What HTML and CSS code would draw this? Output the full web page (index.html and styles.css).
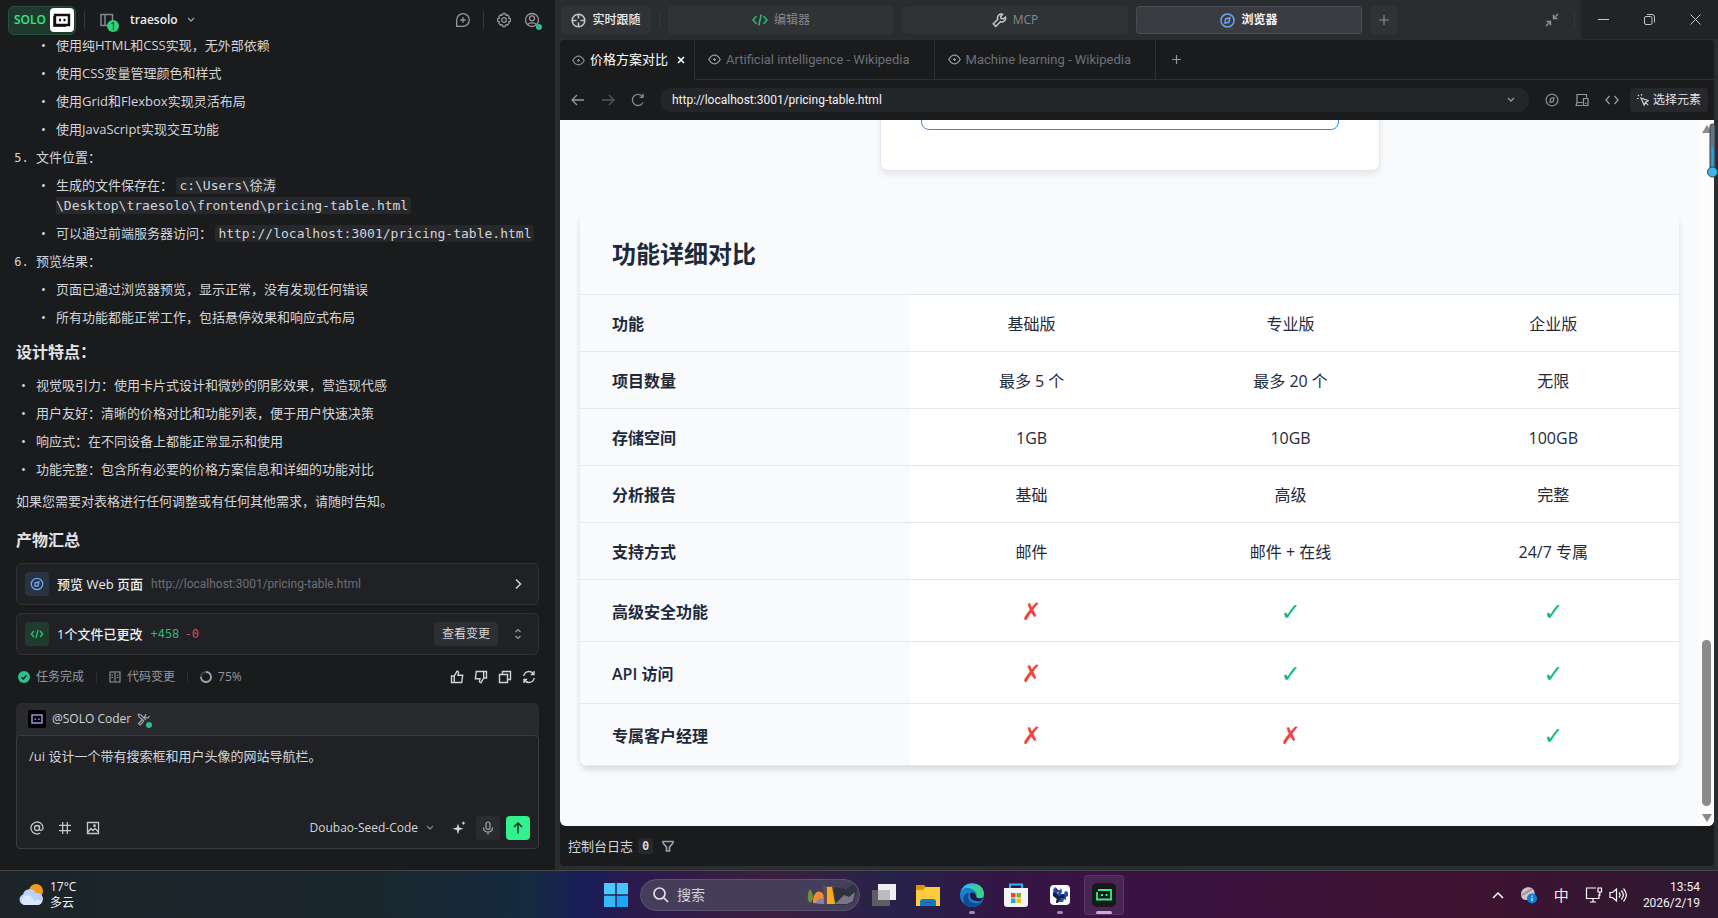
FILE: index.html
```html
<!DOCTYPE html>
<html lang="zh-CN">
<head>
	<meta charset="utf-8">
	<title>traesolo</title>
	<link rel="stylesheet" href="styles.css">
</head>
<body>
	<div class="window">
		<!-- Chat -->
		<section class="chat">
			<header class="chat-header">
				<button class="solo" aria-label="SOLO">
					<span>SOLO</span>
					<span class="solo-tile"><svg width="18" height="14" viewBox="0 0 18 14" fill="none" stroke="#111" stroke-width="2.4"><path d="M2 2h14v10H2z"/><path d="M1 3v10h12" stroke-width="1.500"/><path d="M6 7h2M10.500 7h2"/></svg></span>
				</button>
				<span class="sep"></span>
				<span class="project-icon">
					<svg width="14" height="14" viewBox="0 0 14 14" fill="none" stroke="#85878e" stroke-width="1.5"><path d="M1 1.500h11.500v11H1zM5 1.500v11"/></svg>
					<i class="count">1</i>
				</span>
				<button class="project">traesolo <svg width="8" height="6" viewBox="0 0 8 6" fill="none" stroke="#9a9ca3" stroke-width="1.3"><path d="M1 1l3 3 3-3"/></svg></button>
				<div class="chat-actions">
					<button aria-label="新建对话"><svg width="16" height="16" viewBox="0 0 16 16" fill="none" stroke="#96989f" stroke-width="1.3"><path d="M1.700 14.300V8A6.300 6.300 0 1 1 8 14.300zM8 5.300v5.400M5.300 8h5.400"/></svg></button>
					<span class="sep"></span>
					<button aria-label="设置"><svg width="16" height="16" viewBox="0 0 16 16" fill="none" stroke="#96989f" stroke-width="1.3"><path d="M6.500 2L8 1.300 9.500 2l.5 1.300 1.600-.3 1.400 1.400-.3 1.600 1.600.6V9.400l-1.600.6.3 1.600-1.400 1.400-1.600-.3-.5 1.300-1.500.7-1.500-.7-.5-1.300-1.600.3L3 11.600l.3-1.600-1.600-.6V6.600L3.300 6 3 4.400 4.400 3l1.600.3z"/><circle cx="8" cy="8" r="2.300"/></svg></button>
					<button class="user" aria-label="账户"><svg width="16" height="16" viewBox="0 0 16 16" fill="none" stroke="#96989f" stroke-width="1.3"><circle cx="8" cy="8" r="6.500"/><circle cx="8" cy="6.300" r="2.500"/><path d="M3.800 12.800c1-2.500 7.400-2.500 8.400 0"/></svg><i class="dot"></i></button>
				</div>
			</header>

			<div class="log">
				<ul class="nested">
					<li>使用纯HTML和CSS实现，无外部依赖</li>
					<li>使用CSS变量管理颜色和样式</li>
					<li>使用Grid和Flexbox实现灵活布局</li>
					<li>使用JavaScript实现交互功能</li>
				</ul>
				<ol start="5">
					<li>文件位置：
						<ul>
							<li>生成的文件保存在： <code>c:\Users\徐涛\Desktop\traesolo\frontend\pricing-table.html</code></li>
							<li>可以通过前端服务器访问： <code>http://localhost:3001/pricing-table.html</code></li>
						</ul>
					</li>
					<li>预览结果：
						<ul>
							<li>页面已通过浏览器预览，显示正常，没有发现任何错误</li>
							<li>所有功能都能正常工作，包括悬停效果和响应式布局</li>
						</ul>
					</li>
				</ol>
				<h3>设计特点：</h3>
				<ul>
					<li>视觉吸引力：使用卡片式设计和微妙的阴影效果，营造现代感</li>
					<li>用户友好：清晰的价格对比和功能列表，便于用户快速决策</li>
					<li>响应式：在不同设备上都能正常显示和使用</li>
					<li>功能完整：包含所有必要的价格方案信息和详细的功能对比</li>
				</ul>
				<p>如果您需要对表格进行任何调整或有任何其他需求，请随时告知。</p>
				<h3>产物汇总</h3>

				<div class="artifact">
					<span class="tile tile-blue"><svg width="14" height="14" viewBox="0 0 14 14" fill="none" stroke="#6ba4ef" stroke-width="1.3"><circle cx="7" cy="7" r="5.700"/><path d="M5 6l4-1-1 4-3 0z"/></svg></span>
					<strong>预览 Web 页面</strong>
					<a href="#">http://localhost:3001/pricing-table.html</a>
					<svg class="end" width="24" height="12" viewBox="0 0 24 12" fill="none" stroke="#d0d2d6" stroke-width="1.5"><path d="M10 1.500L14.500 6 10 10.500"/></svg>
				</div>
				<div class="artifact">
					<span class="tile tile-green"><svg width="14" height="12" viewBox="0 0 14 12" fill="none" stroke="#2fc678" stroke-width="1.3"><path d="M4 3L1.300 6 4 9M10 3l2.700 3L10 9M8 2L6 10"/></svg></span>
					<strong>1个文件已更改</strong>
					<span class="diff"><ins>+458</ins> <del>-0</del></span>
					<button class="review end">查看变更</button>
					<svg width="24" height="12" viewBox="0 0 24 12" fill="none" stroke="#96989f" stroke-width="1.2"><path d="M9.500 4L12 1.500 14.500 4M9.500 8l2.500 2.500L14.500 8"/></svg>
				</div>

				<div class="status">
					<svg width="12" height="12" viewBox="0 0 12 12"><circle cx="6" cy="6" r="6" fill="#2fbf8f"/><path d="M3.500 6.200l1.800 1.700 3.200-3.500" fill="none" stroke="#1a1b1d" stroke-width="1.4"/></svg>
					<span>任务完成</span>
					<span class="sep small"></span>
					<svg width="12" height="12" viewBox="0 0 12 12" fill="none" stroke="#96989f" stroke-width="1.1"><path d="M5 1H1v10h4M7 1h4v10H7M6 0v12M2.500 4H4M2.500 6.500H4M8 4h1.500M8 6.500h1.500"/></svg>
					<span>代码变更</span>
					<span class="sep small"></span>
					<svg width="12" height="12" viewBox="0 0 12 12" fill="none" stroke-width="1.8"><circle cx="6" cy="6" r="5" stroke="#45474d"/><path d="M6 1a5 5 0 1 1-5 5" stroke="#a4a6ad"/></svg>
					<span>75%</span>
					<div class="feedback end">
						<button aria-label="赞"><svg width="14" height="14" viewBox="0 0 14 14" fill="none" stroke="#d0d2d6" stroke-width="1.4"><path d="M1.500 6h2.800v6.500H1.500zM4.300 6L7 1.300c1.500 0 1.800 1 1.400 2.300L8 5.200h4.700l-1 7.300H4.300"/></svg></button>
						<button aria-label="踩"><svg width="14" height="14" viewBox="0 0 14 14" fill="none" stroke="#d0d2d6" stroke-width="1.4"><path d="M12.500 8H9.700V1.500h2.800zM9.700 8L7 12.700c-1.500 0-1.800-1-1.400-2.300L6 8.800H1.300l1-7.300h7.400"/></svg></button>
						<button aria-label="复制"><svg width="14" height="14" viewBox="0 0 14 14" fill="none" stroke="#d0d2d6" stroke-width="1.4"><path d="M1.500 4.500h8v8h-8zM4.500 4.500v-3h8v8h-3"/></svg></button>
						<button aria-label="重试"><svg width="14" height="14" viewBox="0 0 14 14" fill="none" stroke="#d0d2d6" stroke-width="1.4"><path d="M1.800 6A5.300 5.300 0 0 1 11.500 4M12.200 8A5.300 5.300 0 0 1 2.500 10M12 1v3.500H8.800M2 13V9.500h3.200"/></svg></button>
					</div>
				</div>
			</div>

			<form class="composer">
				<div class="agent">
					<span class="agent-tile"><svg width="12" height="10" viewBox="0 0 12 10" fill="none" stroke="#a78bdf" stroke-width="1.5"><path d="M1 1h10v8H1zM3.500 5.200h1.600M7 5.200h1.600"/></svg></span>
					<label for="prompt">@SOLO Coder</label>
					<span class="tools"><svg width="13" height="13" viewBox="0 0 13 13" fill="none" stroke="#a4a6ad" stroke-width="1.2"><path d="M1 1l3 1 5 5M1 1l1 3 5 4M9 1L7.500 4 11 5l1.500-2M6 6l-4.500 4.500 1.500 1.500L7 8"/></svg><i class="dot"></i></span>
				</div>
				<div class="editor">
					<textarea id="prompt" spellcheck="false">/ui 设计一个带有搜索框和用户头像的网站导航栏。</textarea>
					<div class="editor-bar">
						<button type="button" aria-label="引用"><svg width="14" height="14" viewBox="0 0 14 14" fill="none" stroke="#c4c6cb" stroke-width="1.3"><circle cx="7" cy="7" r="2.500"/><path d="M9.500 4.500v3.700c0 2 3.500 1.600 3.500-1.200a6 6 0 1 0-2.700 5"/></svg></button>
						<button type="button" aria-label="话题"><svg width="14" height="14" viewBox="0 0 14 14" fill="none" stroke="#c4c6cb" stroke-width="1.3"><path d="M1 4.300h12M1 9.700h12M4.700 1v12M9.300 1v12"/></svg></button>
						<button type="button" aria-label="图片"><svg width="14" height="14" viewBox="0 0 14 14" fill="none" stroke="#c4c6cb" stroke-width="1.3"><path d="M1.500 1.500h11v11h-11zM2 11l3-3.500 2 2 2-2 3.500 3.500"/><circle cx="8.500" cy="4.800" r=".8"/></svg></button>
						<button type="button" class="model end">Doubao-Seed-Code <svg width="8" height="6" viewBox="0 0 8 6" fill="none" stroke="#7f8188" stroke-width="1.300"><path d="M1 1l3 3 3-3"/></svg></button>
						<button type="button" aria-label="优化"><svg width="14" height="14" viewBox="0 0 14 14" fill="#d6d8dc"><path d="M6 2.500l1.200 4 4.300 1.300-4.300 1.300L6 13.500l-1.200-4.400L.5 7.800l4.300-1.300zM11.500 0l.6 1.500 1.600.6-1.600.6-.6 1.500-.6-1.500-1.500-.6 1.500-.6z"/></svg></button>
						<button type="button" class="mic" aria-label="语音"><svg width="12" height="14" viewBox="0 0 12 14" fill="none" stroke="#a4a6ad" stroke-width="1.200"><rect x="4" y="1" width="4" height="7.500" rx="2"/><path d="M1.500 6.500c0 6 9 6 9 0M6 11v2.500"/></svg></button>
						<button class="send" aria-label="发送"><svg width="12" height="12" viewBox="0 0 12 12" fill="none" stroke="#12321f" stroke-width="1.500"><path d="M6 11.500V1M2 5l4-4 4 4"/></svg></button>
					</div>
				</div>
			</form>
		</section>

		<!-- Tools -->
		<section class="workspace">
			<header class="top">
				<nav class="panels">
					<button class="follow"><svg width="15" height="15" viewBox="0 0 15 15" fill="none" stroke="#c4c6cb" stroke-width="1.600"><circle cx="7.500" cy="7.500" r="6.300"/><path d="M7.500 1v4.500M7.500 9.500V14M1 7.500h4.500M9.500 7.500H14"/></svg>实时跟随</button>
					<span class="sep"></span>
					<button class="panel"><svg width="16" height="14" viewBox="0 0 16 14" fill="none" stroke="#2fb673" stroke-width="1.600"><path d="M4.500 3L1 7l3.500 4M11.500 3L15 7l-3.500 4M9.200 1.500L6.800 12.500"/></svg>编辑器</button>
					<button class="panel"><svg width="15" height="15" viewBox="0 0 15 15" fill="none" stroke="#c4c6cb" stroke-width="1.500"><path d="M10.500 1.300a3.800 3.800 0 0 0-4.700 5L1.300 10.800l2.400 2.700 4.800-4.800a3.800 3.800 0 0 0 5-4.500L11.300 6 9 5.300 8.700 3.500z"/></svg>MCP</button>
					<button class="panel active"><svg width="15" height="15" viewBox="0 0 15 15" fill="none" stroke="#6ba4ef" stroke-width="1.500"><circle cx="7.500" cy="7.500" r="6.500"/><path d="M5.500 6l4.300-1.300L9 9.300 5 10z"/></svg>浏览器</button>
					<button class="add" aria-label="添加"><svg width="10" height="10" viewBox="0 0 10 10" stroke="#85878e" stroke-width="1.200"><path d="M5 0v10M0 5h10"/></svg></button>
					<button class="shrink end" aria-label="收起"><svg width="14" height="14" viewBox="0 0 14 14" fill="none" stroke="#8f9198" stroke-width="1.400"><path d="M13 1L8.500 5.500M8.500 1.500v4h4M1 13l4.500-4.500M1.500 8.500h4v4"/></svg></button>
					<span class="sep"></span>
				</nav>
				<div class="caption">
					<button aria-label="最小化"><svg width="11" height="11" viewBox="0 0 11 11" stroke="#c4c6cb"><path d="M0 5.500h11"/></svg></button>
					<button aria-label="还原"><svg width="11" height="11" viewBox="0 0 11 11" fill="none" stroke="#c4c6cb"><rect x=".5" y="2.500" width="7.500" height="8" rx="1.500"/><path d="M3 .5h5a2.500 2.500 0 0 1 2.500 2.500v5.500"/></svg></button>
					<button aria-label="关闭"><svg width="11" height="11" viewBox="0 0 11 11" stroke="#c4c6cb"><path d="M.5.5l10 10M10.500.5l-10 10"/></svg></button>
				</div>
			</header>

			<div class="browser">
				<nav class="tabs">
					<button class="tab current"><svg width="13" height="11" viewBox="0 0 13 11" fill="none" stroke="#85878e" stroke-width="1.200"><path d="M.8 5.500C4-.3 9-.3 12.200 5.500 9 11.300 4 11.300.8 5.500zM6.500 4v3M5 5.500h3"/></svg>价格方案对比<svg class="close" width="8" height="8" viewBox="0 0 8 8" stroke="#fff" stroke-width="1.600"><path d="M1 1l6 6M7 1L1 7"/></svg></button>
					<button class="tab"><svg width="13" height="11" viewBox="0 0 13 11" fill="none" stroke="#96989f" stroke-width="1.200"><path d="M.8 5.500C4-.3 9-.3 12.200 5.500 9 11.300 4 11.300.8 5.500zM6.500 4v3M5 5.500h3"/></svg>Artificial intelligence - Wikipedia</button>
					<button class="tab"><svg width="13" height="11" viewBox="0 0 13 11" fill="none" stroke="#96989f" stroke-width="1.200"><path d="M.8 5.500C4-.3 9-.3 12.200 5.500 9 11.300 4 11.300.8 5.500zM6.500 4v3M5 5.500h3"/></svg>Machine learning - Wikipedia</button>
					<button class="new-tab" aria-label="新标签页"><svg width="9" height="9" viewBox="0 0 9 9" stroke="#96989f" stroke-width="1.200"><path d="M4.500 0v9M0 4.500h9"/></svg></button>
				</nav>
				<div class="address">
					<button aria-label="后退"><svg width="14" height="12" viewBox="0 0 14 12" fill="none" stroke="#96989f" stroke-width="1.300"><path d="M13 6H1.500M6 1L1 6l5 5"/></svg></button>
					<button aria-label="前进"><svg width="14" height="12" viewBox="0 0 14 12" fill="none" stroke="#55575d" stroke-width="1.300"><path d="M1 6h11.500M8 1l5 5-5 5"/></svg></button>
					<button aria-label="刷新"><svg width="14" height="14" viewBox="0 0 14 14" fill="none" stroke="#85878e" stroke-width="1.300"><path d="M12 9.500A5.600 5.600 0 1 1 11.500 3.500M12 .8v3.500H8.500"/></svg></button>
					<div class="url">
						<input type="text" aria-label="地址" value="http://localhost:3001/pricing-table.html">
						<svg width="8" height="6" viewBox="0 0 8 6" fill="none" stroke="#96989f" stroke-width="1.300"><path d="M1 1l3 3 3-3"/></svg>
					</div>
					<button aria-label="外部打开"><svg width="14" height="14" viewBox="0 0 15 15" fill="none" stroke="#85878e" stroke-width="1.400"><circle cx="7.500" cy="7.500" r="6.300"/><path d="M6 6l3.500-1L9 9l-3.500 1z"/></svg></button>
					<button aria-label="设备"><svg width="14" height="14" viewBox="0 0 14 14" fill="none" stroke="#96989f" stroke-width="1.200"><path d="M2 9.500v-8h9.500v3M.5 12.500h7M2 9.500l-1 3M2 9.500h5.500M8.500 5.500h4.500v7H8.500zM10 10.500h1.500"/></svg></button>
					<button aria-label="开发者工具"><svg width="14" height="10" viewBox="0 0 14 10" fill="none" stroke="#96989f" stroke-width="1.300"><path d="M4.500 1L1 5l3.500 4M9.500 1L13 5 9.500 9"/></svg></button>
					<button class="pick"><svg width="12" height="12" viewBox="0 0 12 12" fill="none" stroke="#d0d2d6" stroke-width="1.200"><path d="M4 4l7.500 2.700-3 1.500-1.300 3zM8.200 8.200l3 3M1 1l1 1M4.500 0v1.500M0 4.500h1.500"/></svg>选择元素</button>
				</div>

				<div class="view">
					<div class="page">
						<div class="plan"><button aria-label="选择企业版"></button></div>
						<div class="compare">
							<h2>功能详细对比</h2>
							<table>
								<tr><th>功能</th><td>基础版</td><td>专业版</td><td>企业版</td></tr>
								<tr><th>项目数量</th><td>最多 5 个</td><td>最多 20 个</td><td>无限</td></tr>
								<tr><th>存储空间</th><td>1GB</td><td>10GB</td><td>100GB</td></tr>
								<tr><th>分析报告</th><td>基础</td><td>高级</td><td>完整</td></tr>
								<tr><th>支持方式</th><td>邮件</td><td>邮件 + 在线</td><td>24/7 专属</td></tr>
								<tr class="marks"><th>高级安全功能</th><td class="no">✗</td><td class="yes">✓</td><td class="yes">✓</td></tr>
								<tr class="marks"><th>API 访问</th><td class="no">✗</td><td class="yes">✓</td><td class="yes">✓</td></tr>
								<tr class="marks"><th>专属客户经理</th><td class="no">✗</td><td class="no">✗</td><td class="yes">✓</td></tr>
							</table>
						</div>
					</div>
					<div class="scrollbar">
						<svg width="10" height="8" viewBox="0 0 10 8" fill="#8b8b8b"><path d="M5 0l5 8H0z"/></svg>
						<div class="track"><i class="thumb"></i></div>
						<svg width="10" height="8" viewBox="0 0 10 8" fill="#8b8b8b"><path d="M0 0h10L5 8z"/></svg>
					</div>
				</div>

				<footer class="console">
					<span>控制台日志</span><code>0</code>
					<svg width="12" height="12" viewBox="0 0 12 12" fill="none" stroke="#96a0b4" stroke-width="1.700"><path d="M1 1.500h10v1.500L7.500 7v4h-3V7L1 3z"/></svg>
				</footer>
			</div>
			<svg class="gauge" width="12" height="56" viewBox="0 0 12 56"><rect x="4" y="1" width="5" height="46" rx="2.500" fill="#65757f" stroke="#34434d"/><path d="M6.500 24v24" stroke="#1fa8e8" stroke-width="2"/><circle cx="6.500" cy="49" r="5" fill="#39b6ea" stroke="#34434d"/></svg>
		</section>
	</div>

	<footer class="taskbar">
		<div class="weather">
			<svg width="26" height="24" viewBox="0 0 26 24"><circle cx="18" cy="8" r="7" fill="#f59b1b"/><path d="M6 22a5.500 5.500 0 0 1-1-10.500A7 7 0 0 1 18 10a6 6 0 0 1 2 12z" fill="#b9d2f7"/><path d="M6 22a5.500 5.500 0 0 1 0-9c5-2 9 1 10 5 3-2 6-1 8 0a5 5 0 0 1-4 4z" fill="#dbe8fb"/></svg>
			<div>17°C<br>多云</div>
		</div>
		<div class="apps">
			<button class="app" aria-label="开始"><svg width="24" height="24" viewBox="0 0 24 24" fill="#4cc8fb"><path d="M0 0h11.300v11.300H0z"/><path fill="#45c4fa" d="M12.700 0H24v11.300H12.700z"/><path fill="#38b8f8" d="M0 12.700h11.300V24H0z"/><path fill="#1ea5f5" d="M12.700 12.700H24V24H12.700z"/></svg></button>
			<label class="search">
				<svg width="16" height="16" viewBox="0 0 16 16" fill="none" stroke="#e0dfe8" stroke-width="1.700"><circle cx="6.500" cy="6.500" r="5.500"/><path d="M10.500 10.500L15 15"/></svg>
				<input type="text" placeholder="搜索" aria-label="搜索">
				<svg width="50" height="20" viewBox="0 0 50 20"><path d="M3 4c-3 4-3 11 0 14 4-3 4-9 0-14z" fill="#6f9130"/><path d="M6 18c-1-15 13-16 12 1z" fill="#f28a3a"/><path d="M9 18c2-6 9-6 10 1z" fill="#7f86b0"/><path d="M16 1h12l4 18H17z" fill="#5d5052"/><path d="M26 2l13 2 8-5 3 6-3 12-8 3H29z" fill="#31323f"/><path d="M20 2h5l3 17h-8z" fill="#fbab1c"/><path d="M28 19l9-9 5 2 6-5-2 9-6 3z" fill="#77768b"/></svg>
			</label>
			<button class="app" aria-label="任务视图"><svg width="24" height="24" viewBox="0 0 24 24"><path fill="#5e5e62" d="M0 7h18v16H0z"/><path fill="#efeff1" d="M6 1h18v16H6z"/><path fill="#bdbdbf" d="M6 7h12v10H6z"/></svg></button>
			<button class="app" aria-label="资源管理器"><svg width="24" height="24" viewBox="0 0 24 24"><path fill="#dd9600" d="M0 2h8l2 2h6v5H0z"/><path fill="#fdcb3e" d="M0 7h7l3-3h14v19H0z"/><path fill="#1279c9" d="M4 23v-5a3 3 0 0 1 3-2h10a3 3 0 0 1 3 2v5z"/><path stroke="#0a5da6" d="M8 19.500h8"/></svg></button>
			<button class="app running" aria-label="Edge"><svg width="24" height="24" viewBox="0 0 24 24"><circle cx="12" cy="12" r="12" fill="#1780cf"/><path fill="#3fcf8e" d="M3 5C8-2 24-1 24 11c0 4-5 5-8 4 3-6-4-11-13-10z"/><path fill="#35b8e5" d="M1 9C4-1 14-1 18 4 11 2 4 4 1 9z"/><path fill="#114b93" d="M9 10c-3 6 2 13 12 9-5 7-14 6-17 1-2-5 0-10 5-10z"/><path fill="#221948" d="M10 11c-1 5 4 8 11 7l2-3c-4 1-7 0-7-2 0-3-5-5-6-2z"/></svg></button>
			<button class="app" aria-label="应用商店"><svg width="24" height="24" viewBox="0 0 24 24"><path fill="none" stroke="#33b6f0" stroke-width="2" d="M6 7V1.500h12V7"/><path fill="#f4f4f6" d="M0 5h24v16a3 3 0 0 1-3 3H3a3 3 0 0 1-3-3z"/><path fill="#e8472b" d="M7 10h4.500v4.500H7z"/><path fill="#7ab51d" d="M12.500 10H17v4.500h-4.500z"/><path fill="#18a3ea" d="M7 15.500h4.500V20H7z"/><path fill="#fbb813" d="M12.500 15.500H17V20h-4.500z"/></svg></button>
			<button class="app running" aria-label="游戏"><svg width="20" height="20" viewBox="0 0 20 20"><rect width="20" height="20" rx="4" fill="#fbfbfd"/><path fill="#1d50b5" d="M5 2l3 3h2l1-2 1 3-1 3h3l1-3 3 1v4l-2 1v3l-2-1-1 3H6l1-4-4-3 1-2-1-3z"/><path fill="#17213b" d="M3 7l3 1 1 2 3 1 3-2 2 2-1 2h-3l-2 2-1 3H6l1-4-4-3zM6 3l2 2-2 1z"/><path fill="#d67768" d="M7 7h2v1.500H7z"/></svg></button>
			<button class="app running active" aria-label="TRAE"><svg width="24" height="24" viewBox="0 0 24 24"><rect width="24" height="24" rx="5" fill="#17191b"/><path fill="none" stroke="#32f08c" stroke-width="1.800" d="M6 7h13v9.500H5V9M5 16.500h12"/><path fill="#32f08c" d="M9 11h2v2H9zM13.500 11h2v2h-2z"/></svg></button>
		</div>
		<div class="tray">
			<svg width="12" height="8" viewBox="0 0 12 8" fill="none" stroke="#fff" stroke-width="1.500"><path d="M1 7l5-5 5 5"/></svg>
			<svg width="18" height="18" viewBox="0 0 18 18"><path fill="#c9c3cc" d="M1 8c0-6 8-9 12-5 3 4 2 9-2 11H6C2 14 1 11 1 8z"/><path stroke="#9c8f9c" stroke-width="2" d="M2 9l10-6"/><circle cx="12" cy="12.500" r="5" fill="#0b7fdc"/><path stroke="#fff" stroke-width="1.200" d="M12 11.800v3.500M12 9.500v1.200"/></svg>
			<span class="ime">中</span>
			<div class="devices">
				<svg width="18" height="16" viewBox="0 0 18 16" fill="none" stroke="#fff" stroke-width="1.200"><path d="M11 1H1.500v10.500H14V7M5 15h6M8 11.500V15M13 1h3.500v4H13zM14.800 5v4"/></svg>
				<svg width="18" height="16" viewBox="0 0 18 16" fill="none" stroke="#fff" stroke-width="1.200"><path d="M1 5.500h2.500L7.500 2v12l-4-3.500H1zM10 5.500c1.300 1.500 1.300 3.500 0 5M12.300 3.500c2.500 2.700 2.500 6.300 0 9M14.500 1.500c3.500 4 3.500 9 0 13"/></svg>
			</div>
			<div class="clock">13:54<br>2026/2/19</div>
		</div>
	</footer>
</body>
</html>
```
FILE: styles.css
```css
* { box-sizing: border-box; }
html, body { height: 100%; }
body {
	margin: 0;
	display: flex;
	flex-direction: column;
	background: #1a1b1d;
	color: #d4d6da;
	font: 13px/20px "Open Sans", "Noto Sans CJK SC", sans-serif;
	overflow: hidden;
}
h2, h3, p, ul, ol { margin: 0; }
svg { display: block; flex: none; }
button, input, textarea { font: inherit; color: inherit; background: none; border: 0; margin: 0; padding: 0; outline: 0; }
button { display: flex; align-items: center; justify-content: center; white-space: nowrap; flex: none; }
i { font-style: normal; }
.end { margin-left: auto; }
.sep { width: 1px; height: 18px; background: #35373b; flex: none; }
.sep.small { height: 12px; margin: 0 6px; background: #2c2e32; }
.dot { position: absolute; right: -2px; bottom: -2px; width: 6px; height: 6px; border-radius: 3px; background: #2fbf8f; }

.window { flex: 1; min-height: 0; display: grid; grid-template-columns: 555px 1fr; }

/* Chat */
.chat { display: flex; flex-direction: column; min-height: 0; padding-bottom: 21px; }
.chat-header { height: 40px; flex: none; display: flex; align-items: center; padding: 0 15px 0 8px; }
.solo { width: 68px; height: 29px; padding: 0 1px 0 5px; justify-content: space-between; border: 1px solid #285040; border-radius: 6px; background: #1e3a2d; color: #32e88a; font-size: 12px; font-weight: 600; }
.solo-tile { width: 24px; height: 24px; border-radius: 4px; background: #fff; display: flex; align-items: center; justify-content: center; }
.solo + .sep { margin: 0 15px 0 8px; }
.project-icon { position: relative; }
.count { position: absolute; left: 7px; top: 7px; width: 12px; height: 12px; border-radius: 6px; background: #2fd07f; color: #12321f; font-size: 10px; line-height: 12px; text-align: center; }
.project { margin-left: 16px; gap: 9px; font-weight: 600; color: #eceef1; font-size: 12px; }
.chat-actions { margin-left: auto; display: flex; align-items: center; gap: 12px; }
.chat-actions button { position: relative; width: 16px; height: 16px; }

.log { flex: 1; min-height: 0; overflow: hidden; display: flex; flex-direction: column; justify-content: flex-end; padding: 0 16px 16px; }
.log > * { flex: none; }
.log ul, .log ol { padding-left: 20px; }
.log ul { list-style-type: "•\00a0\00a0\00a0"; }
.log ul.nested { padding-left: 40px; }
.log li { margin-bottom: 8px; }
.log li ul { margin-top: 8px; }
ol > li::marker { font-family: "DejaVu Sans Mono", monospace; font-size: 12px; }
.log h3 { margin: 5px 0 11px; font-size: 16px; line-height: 24px; font-weight: 600; color: #e2e4e8; }
.log p { margin: 4px 0 12px; }
.log code { padding: 1px 3px; border-radius: 3px; background: #26282b; font: 13px/16px "DejaVu Sans Mono", "Noto Sans CJK SC", monospace; }

.artifact { height: 42px; margin-bottom: 8px; padding: 0 8px; display: flex; align-items: center; gap: 8px; border: 1px solid #303236; border-radius: 6px; background: #202124; }
.artifact strong { font-weight: 500; color: #eceef1; }
.artifact a { font-family: Roboto, sans-serif; font-size: 12px; color: #6d6f76; text-decoration: none; }
.tile { width: 24px; height: 24px; border-radius: 4px; display: flex; align-items: center; justify-content: center; }
.tile-blue { background: #293342; }
.tile-green { background: #203a2e; }
.diff { font: 12px/20px "DejaVu Sans Mono", monospace; }
.diff ins { color: #2fb673; text-decoration: none; }
.diff del { color: #e5484d; text-decoration: none; margin-left: -2px; }
.review { height: 24px; padding: 0 8px; border-radius: 4px; background: #2d2f32; font-size: 12px; }
.status { display: flex; align-items: center; gap: 6px; height: 20px; margin-top: 4px; padding: 0 3px 0 2px; font-size: 12px; color: #96989f; }
.feedback { display: flex; gap: 10px; }

.composer { flex: none; margin: 0 16px; border-radius: 6px; background: #292a2d; }
.agent { height: 32px; display: flex; align-items: center; gap: 6px; padding: 0 12px; font-size: 12px; font-weight: 500; }
.agent-tile { width: 18px; height: 18px; border-radius: 2px; background: #000; display: flex; align-items: center; justify-content: center; }
.tools { position: relative; }
.editor { height: 114px; padding: 10px 8px 8px 12px; border: 1px solid #3a3c40; border-radius: 4px; background: #202124; display: flex; flex-direction: column; }
.editor textarea { flex: 1; resize: none; width: 100%; }
.editor-bar { display: flex; align-items: center; gap: 14px; padding-left: 1px; }
.editor-bar button { min-width: 14px; height: 24px; }
.editor-bar .model { gap: 8px; margin-right: 4px; margin-left: auto; font-size: 12px; }
.editor-bar .mic, .editor-bar .send { width: 24px; border-radius: 4px; background: #2a2b2e; }
.editor-bar .mic { margin-left: -4px; }
.editor-bar .send { background: #32f08c; margin-left: -8px; }

/* Workspace */
.workspace { position: relative; min-width: 0; min-height: 0; display: flex; flex-direction: column; padding: 0 4px 4px 5px; background: #2a2d30; }
.top { height: 40px; flex: none; margin-right: -4px; display: flex; }
.panels { flex: 1; min-width: 0; display: flex; align-items: center; gap: 8px; padding: 0 6px 0 1px; }
.panels button { height: 28px; border-radius: 4px; background: #303336; }
.panels .follow { width: 90px; gap: 6px; color: #eceef1; font-size: 12px; font-weight: 500; }
.panels .panel { flex: 0 1 226px; gap: 6px; color: #85878e; font-size: 12px; }
.panels .active { border: 1px solid #4a4d52; background: #3a3c41; color: #f2f3f5; font-weight: 700; }
.panels .add { width: 28px; }
.panels .shrink { width: 28px; margin-left: auto; background: none; }
.caption { width: 137px; height: 39px; flex: none; display: flex; background: #222326; }
.caption button { flex: 1; }

.browser { flex: 1; min-height: 0; display: flex; flex-direction: column; border-radius: 4px; background: #1a1b1d; overflow: hidden; }
.tabs { height: 40px; flex: none; display: flex; }
.tab { gap: 5px; padding: 0 24px 0 13px; border-right: 1px solid #2c2e32; border-bottom: 1px solid #2c2e32; color: #6d7078; font-family: Roboto, "Noto Sans CJK SC", sans-serif; }
.tab.current { padding: 0 9px 0 12px; border-bottom: 0; color: #fff; }
.close { margin-left: 4px; }
.new-tab { flex: 1; justify-content: flex-start; padding-left: 16px; border-bottom: 1px solid #2c2e32; }
.address { height: 40px; flex: none; display: flex; align-items: center; gap: 16px; padding: 0 6px 0 11px; }
.url { flex: 1; min-width: 0; height: 24px; margin-left: -1px; padding: 0 14px 0 12px; border-radius: 12px; background: #242528; display: flex; align-items: center; }
.url input { flex: 1; min-width: 0; color: #f2f3f5; font-family: Roboto, sans-serif; font-size: 12px; }
.pick { height: 24px; gap: 4px; padding: 0 7px; margin-left: -5px; border-radius: 4px; background: #27282b; font-size: 12px; color: #e2e4e8; }

/* Previewed page */
.view { flex: 1; min-height: 0; display: flex; overflow: hidden; border-radius: 0 0 6px 6px; background: #f9fafc; }
.page { flex: 1; min-width: 0; display: flex; flex-direction: column; justify-content: flex-end; padding: 0 20px 60px; color: #1e293b; font-size: 16px; line-height: 24px; }
.page > * { flex: none; }
.plan { width: 500px; align-self: center; margin-bottom: 43px; padding: 40px; border: 1px solid #e2e8f0; border-radius: 8px; background: #fff; box-shadow: 0 4px 6px rgba(0, 0, 0, .07); }
.plan button { width: 100%; height: 48px; border: 1px solid #3b82f6; border-radius: 8px; }
.compare { border-radius: 8px; background: #fff; box-shadow: 0 4px 6px rgba(0, 0, 0, .12); overflow: hidden; }
.compare h2 { padding: 24px 32px; border-bottom: 1px solid #e2e8f0; background: #f9fafc; font-size: 24px; line-height: 32px; font-weight: 600; }
.compare table { width: 100%; border-collapse: separate; border-spacing: 0; }
.compare th, .compare td { height: 57px; padding: 2px 32px 0; border-bottom: 1px solid #e2e8f0; text-align: center; }
.compare th { width: 30%; text-align: left; font-weight: 600; background: #f9fafc; }
.compare .marks th, .compare .marks td { height: 62px; }
.yes, .no { font-size: 24px; font-family: "DejaVu Sans", sans-serif; }
.yes { color: #10b981; }
.no { color: #ef4444; }
.scrollbar { width: 15px; display: flex; flex-direction: column; align-items: center; gap: 8px; padding: 5px 0 4px; background: #fcfcfc; }
.track { flex: 1; width: 9px; display: flex; align-items: flex-end; }
.thumb { width: 9px; height: 25%; border-radius: 5px; background: #8b8b8b; }
.gauge { position: absolute; right: 0; top: 123px; }
.console { height: 40px; flex: none; display: flex; align-items: center; gap: 5px; padding-left: 8px; }
.console code { padding: 0 4px; margin-right: 4px; border-radius: 3px; background: #26282b; font: bold 12px/16px "DejaVu Sans Mono", monospace; }

/* Taskbar */
.taskbar {
	height: 48px;
	flex: none;
	display: grid;
	grid-template-columns: 1fr auto 1fr;
	align-items: center;
	border-top: 1px solid #45474d;
	background: linear-gradient(90deg, #1c2428 0%, #1a272e 22%, #152a40 31%, #191e5a 34%, #2b1a4d 37%, #3c1f3f 45%, #26224a 52%, #331645 58%, #3a1344 65%, #3c1236 78%, #3f1230 85%, #2c1930 100%);
	color: #f4f4f6;
	font-size: 12px;
	line-height: 16px;
}
.weather { display: flex; align-items: center; gap: 6px; padding-left: 18px; }
.apps { display: flex; align-items: center; gap: 4px; padding-left: 2px; }
.app { position: relative; width: 40px; height: 40px; border-radius: 4px; }
.app.active { background: rgba(255, 255, 255, .08); border: 1px solid rgba(255, 255, 255, .08); }
.running::after { content: ""; position: absolute; left: 17px; bottom: 1px; width: 6px; height: 3px; border-radius: 2px; background: #9c8fa3; }
.running.active::after { left: 11px; bottom: 0; width: 16px; background: #d7a0e8; }
.search { width: 220px; height: 32px; display: flex; align-items: center; gap: 8px; padding: 0 2px 0 12px; border: 1px solid #5b5370; border-radius: 16px; background: #453e5b; font-size: 14px; overflow: hidden; }
.search input { flex: 1; min-width: 0; }
.search input::placeholder { color: #d3d0dc; }
.tray { display: flex; align-items: center; justify-content: flex-end; gap: 16px; padding-right: 18px; }
.ime { font-size: 15px; }
.devices { display: flex; gap: 6px; }
.clock { text-align: right; font-family: Roboto, sans-serif; }
```
